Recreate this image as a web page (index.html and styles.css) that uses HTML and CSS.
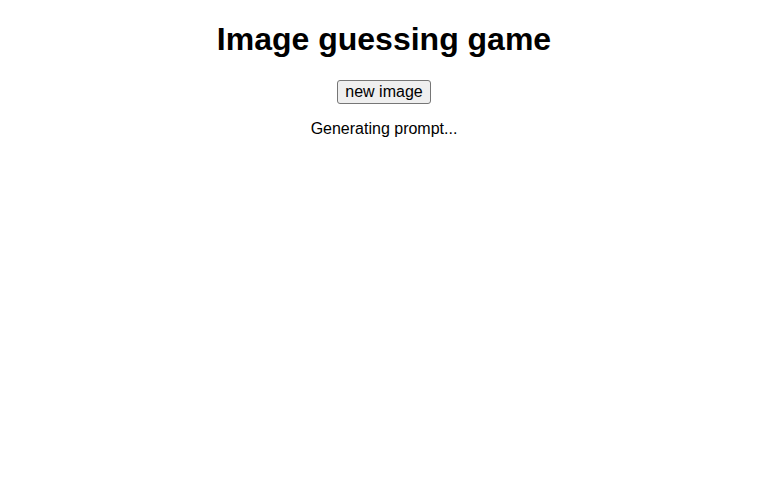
FILE: index.html
```html
<!DOCTYPE html>
<html lang="en">
<head>
    <meta charset="utf-8">
    <title>Image guessing game</title>
    <link rel="stylesheet" href="styles.css">
</head>
<body>
    <h1>Image guessing game</h1>
    <div class="controls">
        <button class="btn" id="newImage">new image</button>
    </div>
    <p class="status" id="status">Generating prompt...</p>
</body>
</html>
```

FILE: styles.css
```css
body {
    margin: 8px;
    font-family: "Liberation Sans", Arial, sans-serif;
    text-align: center;
    color: #000;
    background: #fff;
}

h1 {
    font-size: 32px;
    margin: 13px 0 22px;
}

.btn {
    font-family: "Liberation Sans", Arial, sans-serif;
    font-size: 16px;
    padding: 2px 7px;
    background: #efefef;
    border: 1px solid #767676;
    border-radius: 3px;
    color: #000;
}

.status {
    font-size: 16px;
    margin: 16px 0;
}
```
